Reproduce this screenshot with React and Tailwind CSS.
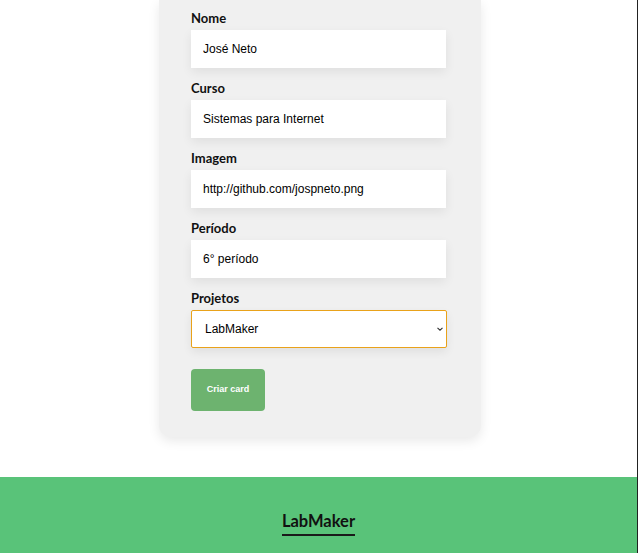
import React from "react";

function Field({ label, value }) {
  return (
    <div className="flex flex-col">
      <label className="h-[16px] leading-[16px] text-[13px] font-bold text-[#111] mb-[4px]" style={{ fontFamily: "Lato, sans-serif" }}>{label}</label>
      <input
        readOnly
        value={value}
        className="h-[38px] w-[255px] bg-white px-[12px] text-[12px] text-black outline-none shadow-[0_4px_10px_rgba(0,0,0,0.07)]"
        style={{ fontFamily: "'Liberation Sans', Arial, sans-serif" }}
      />
    </div>
  );
}

export default function App() {
  return (
    <div className="flex w-[638px] h-[553px] overflow-hidden bg-white">
      <div className="flex flex-col w-[637px]">
        <div className="flex justify-center pl-[3px]">
          <div className="w-[322px] bg-[#f0f0f0] rounded-b-[12px] pt-[10px] pb-[26px] pl-[32px] shadow-[0_4px_12px_rgba(0,0,0,0.09)] flex flex-col gap-[12px]">
            <Field label="Nome" value="José Neto" />
            <Field label="Curso" value="Sistemas para Internet" />
            <Field label="Imagem" value="http://github.com/jospneto.png" />
            <Field label="Período" value="6° período" />
            <div className="flex flex-col">
              <label className="h-[16px] leading-[16px] text-[13px] font-bold text-[#111] mb-[4px]" style={{ fontFamily: "Lato, sans-serif" }}>Projetos</label>
              <div className="relative w-[256px] h-[38px]">
                <select
                  defaultValue="LabMaker"
                  className="appearance-none h-[38px] w-[256px] bg-white pl-[13px] text-[12px] text-black border border-[#e9a21a] rounded-[2px] outline-none shadow-[0_4px_10px_rgba(0,0,0,0.07)]"
                  style={{ fontFamily: "'Liberation Sans', Arial, sans-serif" }}
                >
                  <option>LabMaker</option>
                </select>
                <svg className="absolute right-[4px] top-[17px] pointer-events-none" width="6" height="4" viewBox="0 0 6 4">
                  <path d="M0.5 0.8 L3 3.2 L5.5 0.8" fill="none" stroke="#333" strokeWidth="1.1" />
                </svg>
              </div>
            </div>
            <div className="pt-[9px]">
              <button
                className="w-[74px] h-[42px] bg-[#6db36f] rounded-[4px] text-white text-[9px] font-bold"
                style={{ fontFamily: "'Liberation Sans', Arial, sans-serif" }}
              >
                Criar card
              </button>
            </div>
          </div>
        </div>
        <div className="mt-[40px] flex-1 bg-[#59c379] flex justify-center pt-[34px]">
          <div className="flex flex-col items-center">
            <span className="text-[16.5px] font-bold text-[#111] leading-[20px]" style={{ fontFamily: "Lato, sans-serif" }}>LabMaker</span>
            <div className="w-full h-[2px] bg-[#1a1a1a] mt-[3px]" />
          </div>
        </div>
      </div>
      <div className="w-px bg-[#222]" />
    </div>
  );
}
